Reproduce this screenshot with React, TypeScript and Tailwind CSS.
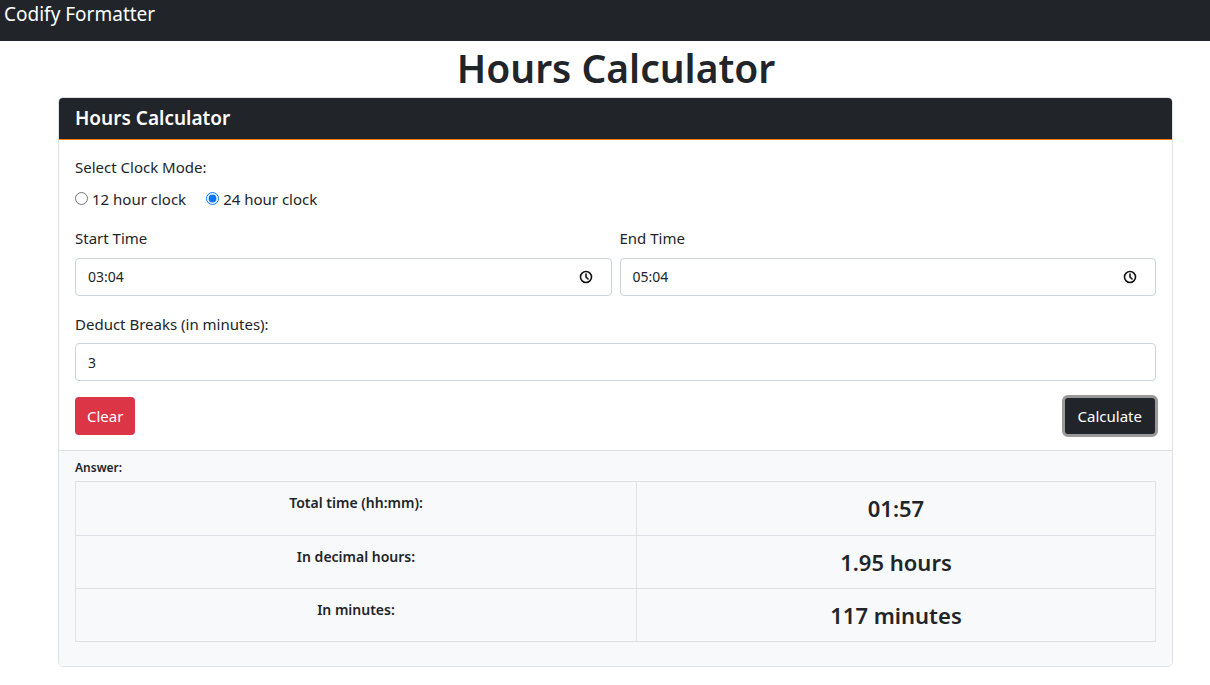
import React from "react";

const Clock = () => (
  <svg width="14" height="14" viewBox="0 0 16 16" fill="none" stroke="#111" strokeWidth="1.8">
    <circle cx="8" cy="8" r="6.3" />
    <path d="M8 4.5V8l2.3 2.3" strokeLinecap="round" />
  </svg>
);

export default function App() {
  const f = { fontFamily: '"Noto Sans", "Open Sans", sans-serif' };
  const rows = [
    ["Total time (hh:mm):", "01:57"],
    ["In decimal hours:", "1.95 hours"],
    ["In minutes:", "117 minutes"],
  ];
  return (
    <div style={f} className="min-h-[685px] bg-white text-[#212529]">
      <div className="h-[41px] bg-[#212529] text-white text-[19px] px-[4px] leading-[28px]">Codify Formatter</div>
      <h1 className="text-center text-[39px] font-semibold leading-[52px] mt-[1px] mb-[3px] pl-[22px]">Hours Calculator</h1>
      <div className="mx-[58px] w-[1115px] border border-[#dee2e6] rounded-[5px] overflow-hidden">
        <div className="bg-[#212529] text-white text-[19px] font-semibold h-[42px] px-[16px] flex items-center border-b border-[#fd7e14]">Hours Calculator</div>
        <div className="px-[16px] pt-[16px] pb-[13px] text-[15px]">
          <div>Select Clock Mode:</div>
          <div className="flex items-center gap-[20px] mt-[9px]">
            <label className="flex items-center gap-[4px]"><input type="radio" name="m" className="w-[13px] h-[13px]" />12 hour clock</label>
            <label className="flex items-center gap-[4px]"><input type="radio" name="m" defaultChecked className="w-[13px] h-[13px]" />24 hour clock</label>
          </div>
          <div className="grid grid-cols-2 gap-[8px] mt-[17px]">
            {["03:04", "05:04"].map((v, i) => (
              <div key={i}>
                <div>{i ? "End Time" : "Start Time"}</div>
                <div className="mt-[8px] h-[38px] border border-[#ced4da] rounded-[4px] flex items-center justify-between px-[12px] pr-[18px] text-[14px]">
                  <span>{v}</span><Clock />
                </div>
              </div>
            ))}
          </div>
          <div className="mt-[17px]">Deduct Breaks (in minutes):</div>
          <div className="mt-[8px] h-[38px] border border-[#ced4da] rounded-[4px] flex items-center px-[12px] text-[14px]">3</div>
          <div className="flex justify-between items-center mt-[14px]">
            <button className="bg-[#dc3545] text-white rounded-[4px] h-[38px] px-[12px]">Clear</button>
            <button className="bg-[#212529] text-white rounded-[6px] h-[42px] px-[13px] border-[3px] border-[#999] -mr-[2px]">Calculate</button>
          </div>
        </div>
        <div className="bg-[#f8f9fa] border-t border-[#dee2e6] px-[16px] pt-[8px] pb-[24px]">
          <div className="text-[12px] font-semibold mb-[4px]">Answer:</div>
          <div className="border border-[#dee2e6]">
            {rows.map(([a, b], i) => (
              <div key={i} className={`grid grid-cols-[561px_1fr] h-[53px] ${i ? "border-t border-[#dee2e6]" : ""}`}>
                <div className="text-center text-[14px] font-semibold pt-[10px] border-r border-[#dee2e6]">{a}</div>
                <div className="text-center text-[22px] font-semibold flex items-center justify-center">{b}</div>
              </div>
            ))}
          </div>
        </div>
      </div>
    </div>
  );
}
